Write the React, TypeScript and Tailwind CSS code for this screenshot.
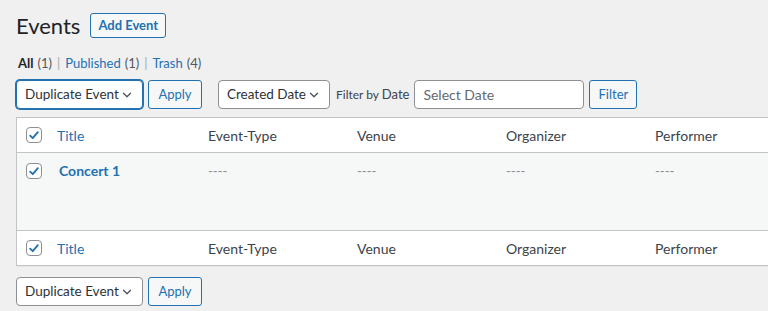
import { ChevronDown } from 'lucide-react';

const columns = ['Event-Type', 'Venue', 'Organizer', 'Performer'];

function Checkbox() {
  return (
    <span className="flex h-4 w-4 items-center justify-center rounded-[4px] border border-[#8c8f94] bg-white">
      <svg viewBox="0 0 20 20" className="h-[15px] w-[15px]">
        <path d="M4.5 10.2 L8.2 13.8 L15.5 5.2" fill="none" stroke="#2271b1" strokeWidth="2.6" strokeLinecap="round" strokeLinejoin="round" />
      </svg>
    </span>
  );
}

function BulkSelect({ focused }: { focused?: boolean }) {
  return (
    <div
      className={`flex h-[29px] w-[127px] shrink-0 items-center justify-between whitespace-nowrap rounded-[4px] border bg-white pl-[8px] pr-[8px] text-[13.5px] text-[#2c3338] ${
        focused ? 'border-[#2271b1] shadow-[0_0_0_1px_#2271b1]' : 'border-[#8c8f94]'
      }`}
    >
      <span>Duplicate Event</span>
      <ChevronDown className="h-[14px] w-[14px] text-[#50575e]" strokeWidth={2.4} />
    </div>
  );
}

function SecondaryButton({ label, width }: { label: string; width: string }) {
  return (
    <button
      className={`flex h-[29px] ${width} items-center justify-center rounded-[3px] border border-[#2271b1] bg-[#f6f7f7] text-[13px] text-[#2271b1]`}
    >
      {label}
    </button>
  );
}

function HeaderRow({ top }: { top?: boolean }) {
  return (
    <div className={`flex h-[35px] items-center bg-white ${top ? 'border-b' : 'border-t'} border-[#c3c4c7]`}>
      <div className="w-[40px] shrink-0 pl-[9px]">
        <Checkbox />
      </div>
      <div className="w-[151px] shrink-0 text-[14px] text-[#2271b1]">Title</div>
      {columns.map((c) => (
        <div key={c} className="w-[149px] shrink-0 text-[14px] text-[#3c434a]">
          {c}
        </div>
      ))}
    </div>
  );
}

export default function App() {
  return (
    <div className="h-[311px] w-[768px] overflow-hidden bg-[#f0f0f1] font-['Lato',sans-serif] text-[#3c434a]">
      <div className="flex items-center gap-[10px] pl-[16px] pt-[11px]">
        <h1 className="text-[22px] leading-[29px] text-[#1d2327]">Events</h1>
        <button className="flex h-[25px] items-center rounded-[3px] border border-[#2271b1] bg-[#f6f7f7] px-[7px] text-[13px] font-bold text-[#2271b1]">
          Add Event
        </button>
      </div>

      <div className="mt-[14px] flex items-center pl-[18px] text-[13px] leading-[18px]">
        <span className="font-bold text-[#1d2327]">All</span>
        <span className="ml-[4px] text-[#50575e]">(1)</span>
        <span className="mx-[5px] text-[#a7aaad]">|</span>
        <span className="text-[#2271b1]">Published</span>
        <span className="ml-[4px] text-[#50575e]">(1)</span>
        <span className="mx-[5px] text-[#a7aaad]">|</span>
        <span className="text-[#2271b1]">Trash</span>
        <span className="ml-[4px] text-[#50575e]">(4)</span>
      </div>

      <div className="mt-[8px] flex items-center pl-[16px]">
        <BulkSelect focused />
        <div className="ml-[5px]">
          <SecondaryButton label="Apply" width="w-[54px]" />
        </div>
        <div className="ml-[16px] flex h-[29px] w-[112px] items-center justify-between whitespace-nowrap rounded-[4px] border border-[#8c8f94] bg-white pl-[8px] pr-[8px] text-[13.5px] text-[#2c3338]">
          <span>Created Date</span>
          <ChevronDown className="h-[14px] w-[14px] text-[#50575e]" strokeWidth={2.4} />
        </div>
        <span className="ml-[6px] whitespace-nowrap text-[12px] text-[#3c434a]">
          Filter by <span className="text-[13px]">Date</span>
        </span>
        <div className="ml-[5px] flex h-[29px] w-[170px] items-center rounded-[4px] border border-[#8c8f94] bg-white px-[8px] text-[14px] text-[#646970]">
          Select Date
        </div>
        <div className="ml-[5px]">
          <SecondaryButton label="Filter" width="w-[48px]" />
        </div>
      </div>

      <div className="ml-[16px] mt-[8px] w-[770px] border border-[#c3c4c7] bg-white shadow-[0_1px_1px_rgba(0,0,0,0.04)]">
        <HeaderRow top />
        <div className="flex h-[77px] items-start bg-[#f6f7f7] pt-[10px]">
          <div className="w-[40px] shrink-0 pl-[9px]">
            <Checkbox />
          </div>
          <div className="w-[151px] shrink-0 pl-[2px] text-[14px] font-bold leading-[16px] text-[#2271b1]">Concert 1</div>
          {columns.map((c) => (
            <div key={c} className="w-[149px] shrink-0 text-[13px] leading-[16px] text-[#8c8f94]">
              ----
            </div>
          ))}
        </div>
        <HeaderRow />
      </div>

      <div className="mt-[11px] flex items-center pl-[16px]">
        <BulkSelect />
        <div className="ml-[5px]">
          <SecondaryButton label="Apply" width="w-[54px]" />
        </div>
      </div>
    </div>
  );
}
